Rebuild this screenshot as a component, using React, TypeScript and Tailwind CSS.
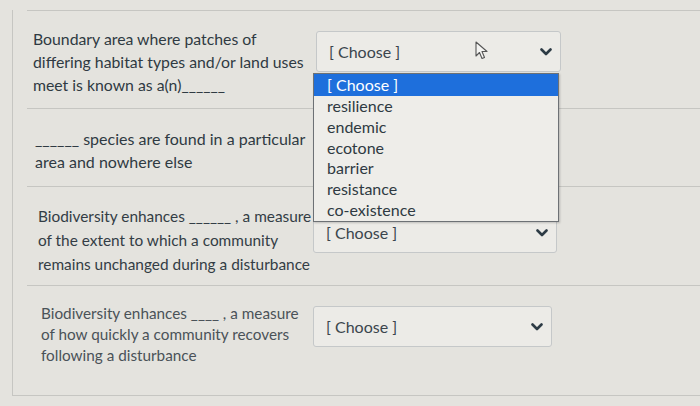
import React from "react";

const options = ["resilience", "endemic", "ecotone", "barrier", "resistance", "co-existence"];

const Chevron = () => (
  <svg width="12" height="8" viewBox="0 0 12 8" className="shrink-0">
    <path d="M1.5 1.5 L6 6 L10.5 1.5" fill="none" stroke="#2d3b45" strokeWidth="2.6" strokeLinecap="round" strokeLinejoin="round" />
  </svg>
);

const Select = ({ className = "" }: { className?: string }) => (
  <div
    className={`flex h-[41px] shrink-0 items-center justify-between rounded-[3px] border border-[#c5c8c9] bg-[#ecebe7] pl-[12px] pr-[8px] text-[16px] text-[#3b454d] ${className}`}
  >
    <span>[ Choose ]</span>
    <Chevron />
  </div>
);

const Row = ({
  lines,
  className = "",
  textClass = "",
  children,
}: {
  lines: string[];
  className?: string;
  textClass?: string;
  children?: React.ReactNode;
}) => (
  <div className={`flex items-start border-t border-[#c6c6c2] ${className}`}>
    <div className={`shrink-0 whitespace-nowrap ${textClass}`}>
      {lines.map((l) => (
        <p key={l}>{l}</p>
      ))}
    </div>
    {children}
  </div>
);

export default function App() {
  return (
    <div
      className="relative h-[406px] w-[700px] overflow-hidden bg-[#e4e3de] pl-[12px] pt-[10px]"
      style={{ fontFamily: "Lato, 'Noto Sans', sans-serif" }}
    >
      <div className="h-[386px] border-b border-l border-[#c6c6c2] pl-[14px]">
        <Row
          className="h-[98px] pt-[16px]"
          textClass="ml-[6px] w-[283px] text-[15.8px] leading-[23px] text-[#2f3a42]"
          lines={["Boundary area where patches of", "differing habitat types and/or land uses", "meet is known as a(n)______"]}
        >
          <Select className="mt-[4px] w-[245px]" />
        </Row>
        <Row
          className="h-[78px] pt-[18px]"
          textClass="ml-[8px] w-[281px] text-[16px] leading-[23px] text-[#2f3a42]"
          lines={["______ species are found in a particular", "area and nowhere else"]}
        />
        <Row
          className="h-[99px] pt-[17px]"
          textClass="ml-[11px] w-[275px] text-[15.4px] leading-[24px] text-[#333d45]"
          lines={["Biodiversity enhances ______ , a measure", "of the extent to which a community", "remains unchanged during a disturbance"]}
        >
          <Select className="mt-[8px] w-[244px]" />
        </Row>
        <Row
          className="pt-[17px]"
          textClass="ml-[14px] w-[272px] text-[15.3px] leading-[21px] text-[#4a5258]"
          lines={["Biodiversity enhances ____ , a measure", "of how quickly a community recovers", "following a disturbance"]}
        >
          <Select className="mt-[3px] w-[239px] text-[15.5px]" />
        </Row>
      </div>

      {/* open dropdown list */}
      <div className="absolute left-[313px] top-[73px] w-[246px] border border-[#6d7175] bg-[#eeede9] text-[16px] leading-[20.8px] text-[#2f3a42] shadow-[1px_1px_2px_rgba(0,0,0,0.2)]">
        <div className="bg-[#1e6fdc] pl-[13px] leading-[22px] text-white">[ Choose ]</div>
        {options.map((o) => (
          <div key={o} className="pl-[13px]">
            {o}
          </div>
        ))}
      </div>

      {/* mouse cursor */}
      <svg className="absolute left-[475px] top-[41px]" width="14" height="20" viewBox="0 0 14 20">
        <path d="M1 1 L1 15 L4.5 11.5 L7 17.5 L9.5 16.5 L7 10.5 L12 10.5 Z" fill="#f4f4f2" stroke="#555" strokeWidth="1.1" strokeLinejoin="round" />
      </svg>
    </div>
  );
}
